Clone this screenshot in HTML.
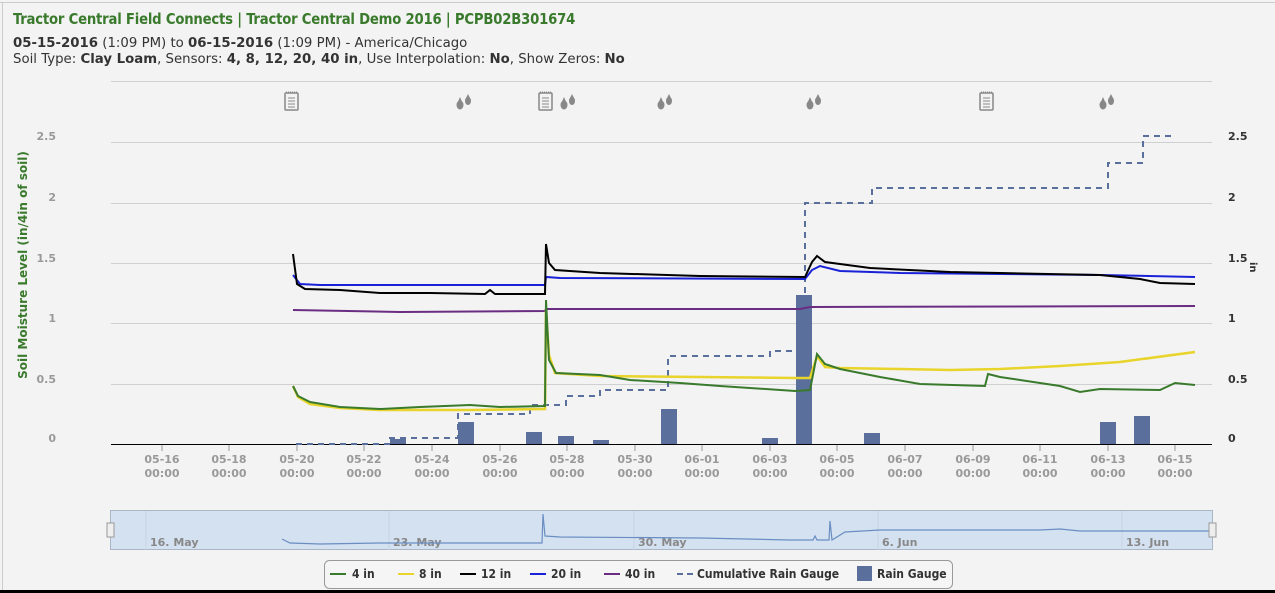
<!DOCTYPE html>
<html><head><meta charset="utf-8"><style>
body{margin:0;width:1275px;height:593px;background:#f3f3f3;font-family:"DejaVu Sans","Liberation Sans",sans-serif;overflow:hidden;position:relative}
.t{position:absolute;left:13px;top:11px;color:#3a7a2c;font-size:14.7px;font-weight:bold;font-family:"DejaVu Sans Condensed","DejaVu Sans",sans-serif;letter-spacing:-0.2px}
.s{position:absolute;left:13px;font-size:13.3px;color:#333;font-family:"DejaVu Sans",sans-serif;white-space:nowrap}
</style></head><body>
<div style="position:absolute;left:0;top:2px;width:1275px;height:1px;background:#ccc"></div>
<div style="position:absolute;left:2px;top:2px;width:1px;height:590px;background:#ccc"></div>
<div style="position:absolute;left:0;top:590px;width:1275px;height:3px;background:#000"></div>
<div class="t">Tractor Central Field Connects | Tractor Central Demo 2016 | PCPB02B301674</div>
<div class="s" style="top:36px"><b>05-15-2016</b> (1:09 PM) to <b>06-15-2016</b> (1:09 PM) - America/Chicago</div>
<div class="s" style="top:52px">Soil Type: <b>Clay Loam</b>, Sensors: <b>4, 8, 12, 20, 40 in</b>, Use Interpolation: <b>No</b>, Show Zeros: <b>No</b></div>
<svg width="1275" height="593" style="position:absolute;left:0;top:0" font-family="DejaVu Sans,sans-serif">
<g stroke="#d0d0d0" stroke-width="1">
<line x1="111" y1="81.5" x2="1212" y2="81.5"/>
<line x1="111" y1="142.5" x2="1212" y2="142.5"/><line x1="111" y1="203.5" x2="1212" y2="203.5"/>
<line x1="111" y1="263.5" x2="1212" y2="263.5"/><line x1="111" y1="323.5" x2="1212" y2="323.5"/>
<line x1="111" y1="384.5" x2="1212" y2="384.5"/></g>
<line x1="111" y1="444.5" x2="1212" y2="444.5" stroke="#000"/>
<g fill="#999" font-size="11" font-weight="bold" text-anchor="end">
<text x="56" y="140">2.5</text><text x="56" y="201">2</text><text x="56" y="262">1.5</text><text x="56" y="322">1</text><text x="56" y="383">0.5</text><text x="56" y="442">0</text></g>
<g fill="#333" font-size="11" font-weight="bold">
<text x="1228" y="140">2.5</text><text x="1228" y="201">2</text><text x="1228" y="262">1.5</text><text x="1228" y="322">1</text><text x="1228" y="383">0.5</text><text x="1228" y="442">0</text>
<text transform="translate(1250,262) rotate(90)" font-size="10">in</text></g>
<text transform="translate(27,265) rotate(-90)" text-anchor="middle" fill="#3a7a2c" font-size="12" font-weight="bold">Soil Moisture Level (in/4in of soil)</text>
<g fill="#999" font-size="11" font-weight="bold" text-anchor="middle" stroke="none">
<text x="162" y="463">05-16</text><text x="162" y="477">00:00</text>
<text x="229" y="463">05-18</text><text x="229" y="477">00:00</text>
<text x="297" y="463">05-20</text><text x="297" y="477">00:00</text>
<text x="364" y="463">05-22</text><text x="364" y="477">00:00</text>
<text x="432" y="463">05-24</text><text x="432" y="477">00:00</text>
<text x="500" y="463">05-26</text><text x="500" y="477">00:00</text>
<text x="567" y="463">05-28</text><text x="567" y="477">00:00</text>
<text x="635" y="463">05-30</text><text x="635" y="477">00:00</text>
<text x="702" y="463">06-01</text><text x="702" y="477">00:00</text>
<text x="770" y="463">06-03</text><text x="770" y="477">00:00</text>
<text x="837" y="463">06-05</text><text x="837" y="477">00:00</text>
<text x="905" y="463">06-07</text><text x="905" y="477">00:00</text>
<text x="973" y="463">06-09</text><text x="973" y="477">00:00</text>
<text x="1040" y="463">06-11</text><text x="1040" y="477">00:00</text>
<text x="1108" y="463">06-13</text><text x="1108" y="477">00:00</text>
<text x="1175" y="463">06-15</text><text x="1175" y="477">00:00</text></g>
<g stroke="#999"><path d="M162 445v6M229 445v6M297 445v6M364 445v6M432 445v6M500 445v6M567 445v6M635 445v6M702 445v6M770 445v6M837 445v6M905 445v6M973 445v6M1040 445v6M1108 445v6M1175 445v6"/></g>
<g fill="#5a6f9c">
<rect x="390" y="439" width="16" height="5"/><rect x="458" y="422" width="16" height="22"/><rect x="526" y="432" width="16" height="12"/>
<rect x="558" y="436" width="16" height="8"/><rect x="593" y="440" width="16" height="4"/><rect x="661" y="409" width="16" height="35"/>
<rect x="762" y="438" width="16" height="6"/><rect x="796" y="295" width="16" height="149"/><rect x="864" y="433" width="16" height="11"/>
<rect x="1100" y="422" width="16" height="22"/><rect x="1134" y="416" width="16" height="28"/></g>
<polyline fill="none" stroke="#5a6f9c" stroke-width="2" stroke-dasharray="6,5" points="296,444 390,444 390,438 458,438 458,414 530,414 530,405 566,405 566,396 600,396 600,390 668,390 668,356 770,356 770,351 805,351 805,203 872,203 872,188 1108,188 1108,163 1143,163 1143,136 1175,136"/>
<polyline fill="none" stroke="#6a2d82" stroke-width="2" points="293,310 400,312 545,311 546,309 800,309 810,307 1195,306"/>
<polyline fill="none" stroke="#1a22d8" stroke-width="2" points="293,275 300,284 320,285 545,285 546,277 560,278 805,279 812,270 820,266 840,271 900,273 1000,274 1100,275 1195,277"/>
<polyline fill="none" stroke="#000" stroke-width="2" points="293,254 297,284 305,289 340,290 380,293 430,293 485,294 490,290 495,294 545,294 546,244 549,263 555,270 600,273 700,276 805,277 812,262 817,256 825,262 840,264 870,268 950,272 1000,273 1100,275 1140,279 1160,283 1195,284"/>
<polyline fill="none" stroke="#e8d42a" stroke-width="2.5" points="293,386 298,397 310,404 340,408 380,410 420,410 470,410 545,409 546,310 549,355 555,373 600,376 700,377 795,378 810,378 817,356 825,367 840,368 900,369 950,370 1000,369 1060,366 1120,362 1195,352"/>
<polyline fill="none" stroke="#3a7a2c" stroke-width="2" points="293,386 298,396 310,402 340,407 380,409 420,407 470,405 500,407 545,406 546,300 549,360 556,373 600,375 630,380 680,383 720,386 795,391 810,390 817,354 825,364 840,369 880,377 920,384 985,386 988,374 1000,377 1060,386 1080,392 1100,389 1160,390 1175,383 1195,385"/>
<g fill="#888">
<g id="np"><rect x="285" y="93" width="13" height="17" rx="1" fill="none" stroke="#888" stroke-width="1.5"/><path d="M288 98h7M288 101h7M288 104h7M288 107h7" stroke="#888"/><path d="M286 92h11" stroke="#888" stroke-dasharray="1,1"/></g>
<use href="#np" x="254"/><use href="#np" x="695"/>
<g id="dr"><ellipse cx="460" cy="105" rx="3.5" ry="4.5"/><ellipse cx="468" cy="101" rx="3" ry="4"/><path d="M460 97l-3 7h6zM468 94l-3 6h6z"/></g>
<use href="#dr" x="104"/><use href="#dr" x="201"/><use href="#dr" x="350"/><use href="#dr" x="643"/>
</g>
<rect x="110.5" y="510.5" width="1102" height="39" fill="#d4e1f1" stroke="#aab6c6"/>
<g stroke="#c4d2e4"><path d="M146 511v39M389 511v39M634 511v39M878 511v39M1122 511v39"/></g>
<g fill="#888" font-size="11" font-weight="bold"><text x="150" y="546">16. May</text><text x="393" y="546">23. May</text><text x="638" y="546">30. May</text><text x="882" y="546">6. Jun</text><text x="1126" y="546">13. Jun</text></g>
<polyline fill="none" stroke="#6a8ec2" stroke-width="1.2" points="282,539 290,543 320,544 380,543 542,543 543,514 545,536 560,537 700,538 790,540 813,540 815,536 817,540 829,540 830,521 832,540 845,532 880,530 900,530 1040,530 1060,529 1080,531 1210,531"/>
<rect x="107" y="523" width="7" height="14" fill="#eee" stroke="#999"/><rect x="1209" y="523" width="7" height="14" fill="#eee" stroke="#999"/>
<rect x="324.5" y="560.5" width="628" height="28" rx="5" fill="#f5f5f5" stroke="#999"/>
<g font-size="12" font-weight="bold" fill="#333" font-family="DejaVu Sans Condensed,DejaVu Sans,sans-serif">
<line x1="330" y1="574" x2="346" y2="574" stroke="#3a7a2c" stroke-width="2"/><text x="352" y="578">4 in</text>
<line x1="398" y1="574" x2="414" y2="574" stroke="#e8d42a" stroke-width="2"/><text x="419" y="578">8 in</text>
<line x1="460" y1="574" x2="476" y2="574" stroke="#000" stroke-width="2"/><text x="481" y="578">12 in</text>
<line x1="530" y1="574" x2="546" y2="574" stroke="#1a22d8" stroke-width="2"/><text x="551" y="578">20 in</text>
<line x1="604" y1="574" x2="620" y2="574" stroke="#6a2d82" stroke-width="2"/><text x="625" y="578">40 in</text>
<line x1="677" y1="574" x2="693" y2="574" stroke="#5a6f9c" stroke-width="2" stroke-dasharray="6,4"/><text x="697" y="578">Cumulative Rain Gauge</text>
<rect x="857" y="566" width="15" height="15" fill="#5a6f9c"/><text x="877" y="578">Rain Gauge</text></g>
</svg>
</body></html>
